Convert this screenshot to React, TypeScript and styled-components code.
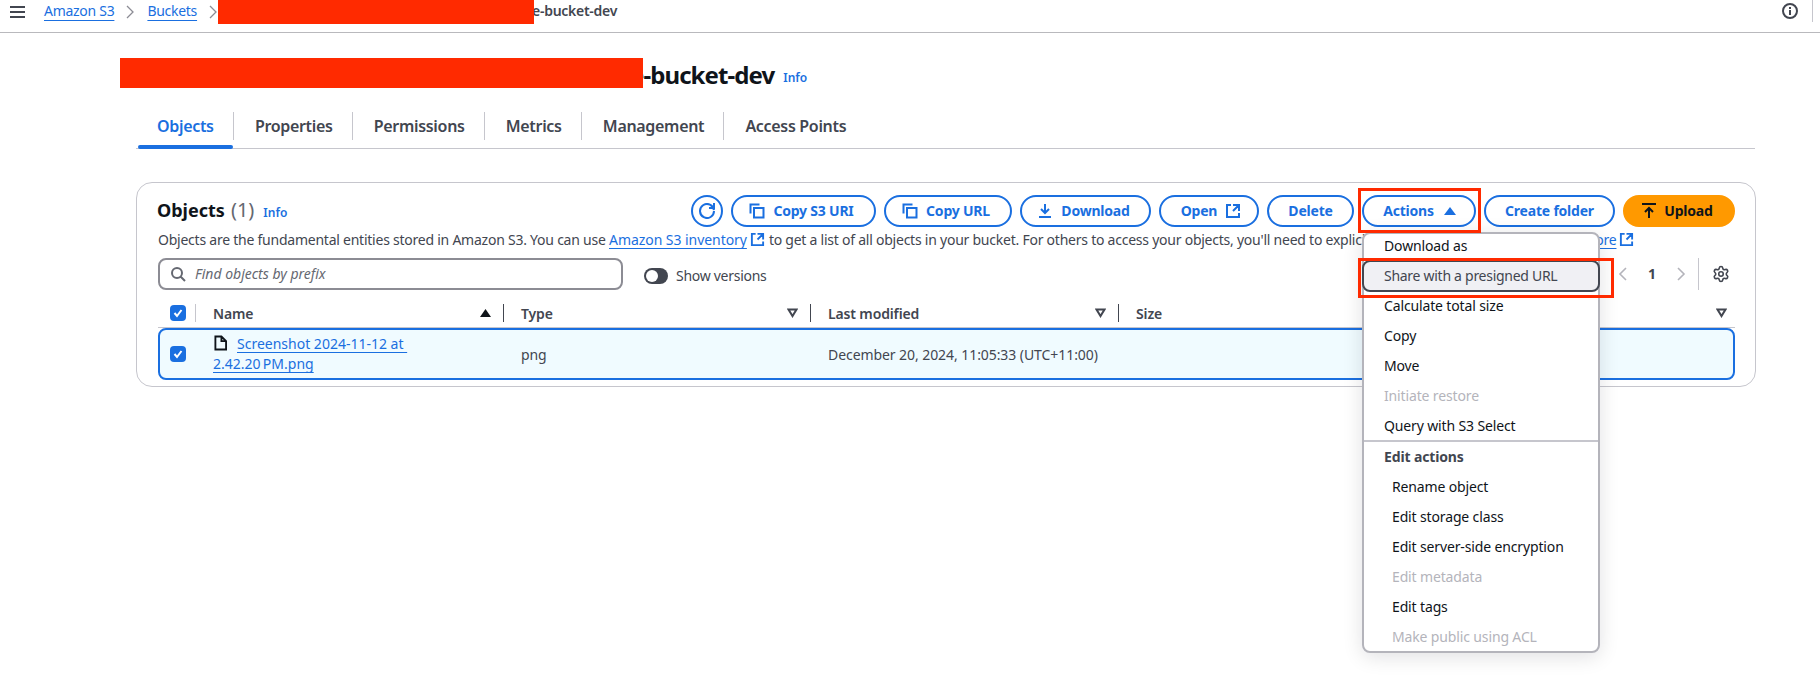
import React from "react";
import styled, { createGlobalStyle } from "styled-components";
import { Settings } from "lucide-react";

const Global = createGlobalStyle`
  html, body { margin: 0; padding: 0; background: #fff; }
  body { font-family: "Noto Sans", "Open Sans", sans-serif; font-size: 14px; line-height: 20px; color: #0f141a; }
  * { box-sizing: border-box; }
`;

const BLUE = "#1a6fe0";
const GRAY = "#424650";
const RED = "#ff2a00";

const Page = styled.div`height: 697px; width: 1820px; overflow: hidden;`;

const TopBar = styled.header`
  height: 33px; padding: 0 7px 0 10px; border-bottom: 1.5px solid #b9b9bd;
  display: flex; align-items: flex-start;
`;
const Burger = styled.svg`width: 15px; height: 12px; margin-top: 6px; color: ${GRAY}; flex: none;`;
const Crumbs = styled.nav`display: flex; align-items: flex-start; margin-left: 19px; flex: 1;`;
const CrumbLink = styled.a`
  color: ${BLUE}; text-decoration: underline; text-underline-offset: 4px; line-height: 22px; font-size: 14px; letter-spacing: -.02em;
`;
const CrumbSep = styled.svg`width: 12px; height: 14px; margin: 5px 11px 0 10px; color: #8c8c94; flex: none;`;
const CrumbRedact = styled.div`position: relative; z-index: 1; width: 316px; height: 24px; background: ${RED}; margin-left: -12px; flex: none;`;
const CrumbCurrent = styled.span`color: ${GRAY}; font-size: 14px; font-weight: 600; line-height: 22px; letter-spacing: -.02em; margin-left: -2px;`;
const InfoBtn = styled.div`
  width: 31px; height: 22px; border-right: 1px solid #c6c6cd; color: ${GRAY}; display: flex; justify-content: flex-start; padding-top: 3px; margin-left: auto;
  svg { width: 16px; height: 16px; }
`;

const TitleRow = styled.div`display: flex; align-items: flex-start; padding: 25px 0 0 120px; height: 55px;`;
const TitleRedact = styled.div`position: relative; z-index: 1; width: 523px; height: 30px; background: ${RED}; flex: none;`;
const TitleText = styled.h1`margin: 0 0 0 -13px; font-size: 24px; line-height: 30px; font-weight: 700; padding-top: 2px; letter-spacing: -.038em;`;
const TitleInfo = styled.a`color: ${BLUE}; font-size: 12px; font-weight: 600; line-height: 16px; margin: 12px 0 0 9px;`;
const InfoLink = styled.a`color: ${BLUE}; font-size: 12px; font-weight: 600; line-height: 16px; margin-left: 9px;`;

const Tabs = styled.div`margin: 24px 65px 0 136px; height: 37px; display: flex; border-bottom: 1.5px solid #c6c6cd; align-items: flex-start;`;
const Tab = styled.div<{ $active?: boolean; $last?: boolean }>`
  position: relative; height: 28px; padding: 0 19.2px 0 21px; display: flex; align-items: center;
  font-size: 16px; font-weight: 600; letter-spacing: -.02em; color: ${(p) => (p.$active ? BLUE : GRAY)};
  border-right: ${(p) => (p.$last ? "none" : "1px solid #c6c6cd")};
  ${(p) => p.$active && `&::after { content: ""; position: absolute; left: 2px; right: 0; top: 33px; height: 4px; background: ${BLUE}; border-radius: 2px; }`}
`;

const Card = styled.section`
  margin: 33px 0 0 136px; width: 1620px; height: 205px; border: 1px solid #c6c6cd; border-radius: 16px; padding: 12px 20px 0 21px;
`;
const CardHead = styled.div`display: flex; justify-content: space-between; align-items: center; height: 32px;`;
const HeadTitle = styled.div`display: flex; align-items: baseline; margin-top: -2px;`;
const H2 = styled.h2`margin: 0 0 0 -1px; font-size: 18px; line-height: 22px; font-weight: 700; letter-spacing: 0;`;
const Count = styled.span`font-size: 20px; color: #656871; margin-left: 6px;`;
const Buttons = styled.div`display: flex; gap: 8px; align-items: center;`;
const Btn = styled.button<{ $w: number }>`
  width: ${(p) => p.$w}px; height: 32px; border-radius: 16px; border: 2px solid ${BLUE}; background: #fff; color: ${BLUE};
  font: 700 14px/20px "Noto Sans", sans-serif; letter-spacing: -.015em; display: inline-flex; align-items: center; justify-content: center; gap: 8px; padding: 0;
  white-space: nowrap;
`;
const LeadIconBtn = styled(Btn)`padding-right: 4px;`;
const TrailIconBtn = styled(Btn)`padding-left: 4px;`;
const PrimaryBtn = styled(Btn)`background: #ff9900; border-color: #ff9900; color: #0f141a; gap: 7px; padding-right: 4px;`;
const IconBtn = styled(Btn)`border-radius: 50%;`;
const ActionsBtn = styled(Btn)`padding-left: 1px; gap: 6px;`;
const Icon = styled.svg<{ $s?: number }>`
  width: ${(p) => p.$s ?? 16}px; height: ${(p) => p.$s ?? 16}px; flex: none; fill: none; stroke: currentColor; stroke-width: 2;
`;
const ActionsWrap = styled.div`position: relative;`;
const Caret = styled.svg`width: 12px; height: 10px; margin-left: 4px; fill: ${BLUE};`;
const RedFrame = styled.div<{ $t: number; $r: number; $b: number; $l: number }>`
  position: absolute; top: ${(p) => p.$t}px; right: ${(p) => p.$r}px; bottom: ${(p) => p.$b}px; left: ${(p) => p.$l}px;
  border: 3px solid ${RED}; pointer-events: none; z-index: 5;
`;
const Menu = styled.div`
  position: absolute; top: 37px; left: 0; width: 238px; height: 421px; background: #fff; z-index: 3;
  border: 2px solid #b4b4bb; border-radius: 8px; box-shadow: 0 4px 20px rgba(0, 7, 22, .12);
`;
const MenuList = styled.div`margin-top: -3px;`;
const MenuItem = styled.div<{ $off?: boolean; $sub?: boolean }>`
  height: 30px; display: flex; align-items: center; padding-left: ${(p) => (p.$sub ? 28 : 20)}px; font-size: 14px; letter-spacing: -.01em; white-space: nowrap;
  color: ${(p) => (p.$off ? "#b4b4bb" : "#0f141a")};
`;
const MenuItemActive = styled(MenuItem)`
  position: relative; height: 32px; margin: -1px -2px; padding-left: 20px; background: #f0f0f4; border: 2px solid ${GRAY}; border-radius: 8px; color: ${GRAY}; letter-spacing: -.02em;
`;
const MenuHeading = styled(MenuItem)`font-weight: 700; color: ${GRAY}; border-top: 2px solid #c6c6cd; height: 32px; margin-top: -1px;`;

const Desc = styled.p`margin: 3px 0 0; height: 20px; color: ${GRAY}; white-space: nowrap; letter-spacing: -.017em; font-size: 14px;`;
const TextLink = styled.a`color: ${BLUE}; text-decoration: underline; text-underline-offset: 3px;`;
const DescLink = styled(TextLink)`letter-spacing: -.004em;`;
const Ext = styled(Icon)`vertical-align: -2px; margin: 0 4px 0 3px; color: ${BLUE}; width: 15px; height: 15px;`;

const Toolbar = styled.div`display: flex; align-items: center; height: 32px; margin-top: 8px;`;
const Search = styled.div`
  width: 465px; height: 32px; border: 2px solid #8c8c94; border-radius: 8px; display: flex; align-items: center; padding-left: 10px; gap: 9px; color: #656871;
  font-style: italic; letter-spacing: 0; font-size: 14px;
`;
const Toggle = styled.div`
  width: 24px; height: 16px; margin: 4px 0 0 21px; border-radius: 8px; background: ${GRAY}; position: relative; flex: none;
  &::before { content: ""; position: absolute; left: 2px; top: 2px; width: 12px; height: 12px; border-radius: 50%; background: #fff; }
`;
const ToggleLabel = styled.span`margin: 4px 0 0 8px; color: ${GRAY}; letter-spacing: -.02em;`;
const Pager = styled.div`margin-left: auto; display: flex; align-items: center; color: #b4b4bb; padding-right: 5px;`;
const PageNum = styled.span`font-weight: 700; color: ${GRAY}; margin: 0 19px;`;
const PagerDivider = styled.div`width: 1px; height: 32px; background: #c6c6cd; margin: 0 13px 0 11px;`;
const Gear = styled(Settings)`width: 18px; height: 18px; color: ${GRAY}; stroke-width: 2.1;`;

const COLS = "38px 308px 307px 308px 1fr";
const TableHead = styled.div`display: grid; grid-template-columns: ${COLS}; height: 31px; margin-top: 7px; border-bottom: 1px solid #c6c6cd; align-items: start;`;
const CheckCell = styled.div`height: 18px; margin-top: 7px; padding-left: 12px; border-right: 1px solid #c6c6cd; display: flex; align-items: center;`;
const HeadCell = styled.div<{ $bar?: boolean; $tail?: number }>`
  height: 18px; margin-top: 7px; padding: 0 ${(p) => p.$tail ?? 12}px 0 17px; display: flex; align-items: center; justify-content: space-between;
  font-weight: 600; color: ${GRAY}; letter-spacing: -.01em; line-height: 20px;
  border-right: ${(p) => (p.$bar ? `1px solid ${GRAY}` : "none")};
`;
const HeadLabel = styled.span`padding-top: 2px;`;
const Checkbox = styled.div`width: 16px; height: 16px; border-radius: 4px; background: ${BLUE}; display: flex; align-items: center; justify-content: center; flex: none;`;
const Sort = styled.svg`width: 11px; height: 10px; flex: none;`;

const Row = styled.div`
  display: grid; grid-template-columns: 36px 308px 307px 308px 1fr; height: 52px; border: 2px solid ${BLUE}; border-radius: 8px; background: #f0fbff; align-items: center;
`;
const RowCheck = styled.div`padding-left: 10px;`;
const NameCell = styled.div`padding-left: 17px; line-height: 20px; width: 250px;`;
const FileIcon = styled(Icon)`vertical-align: -2px; margin: 0 10px 0 1px; color: #0f141a; width: 13px; height: 16px;`;
const Cell = styled.div`padding: 2px 0 0 17px; color: ${GRAY}; letter-spacing: -.005em; white-space: nowrap;`;

const Ic = ({ d, s }: { d: string; s?: number }) => (
  <Icon viewBox="0 0 16 16" $s={s}><path d={d} /></Icon>
);
const COPY = "M1.5 10.5V1.5h9M5 5h9.5v9.5H5z";
const EXT = "M14 8V2H8M14 2 8 8M6 2H2v12h12v-4";
const Tick = () => (
  <svg width="12" height="12" viewBox="0 0 12 12" fill="none" stroke="#fff" strokeWidth="2"><path d="m2.5 6 2.5 3 4.5-6" /></svg>
);
const FilterIcon = () => (
  <Sort viewBox="0 0 11 10" fill="none" stroke={GRAY} strokeWidth="2"><path d="M1.5 1.5h8L5.5 8z" /></Sort>
);
const Chevron = ({ d }: { d: string }) => (
  <svg width="12" height="16" viewBox="0 0 12 16" fill="none" stroke="currentColor" strokeWidth="1.6"><path d={d} /></svg>
);

export default function App() {
  const tabs = ["Objects", "Properties", "Permissions", "Metrics", "Management", "Access Points"];
  return (
    <Page>
      <Global />
      <TopBar>
        <Burger viewBox="0 0 15 12" fill="none" stroke="currentColor" strokeWidth="2"><path d="M0 1h15M0 6h15M0 11h15" /></Burger>
        <Crumbs>
          <CrumbLink>Amazon S3</CrumbLink>
          <CrumbSep viewBox="0 0 12 14" fill="none" stroke="currentColor" strokeWidth="1.3"><path d="m3 1 6 6-6 6" /></CrumbSep>
          <CrumbLink>Buckets</CrumbLink>
          <CrumbSep viewBox="0 0 12 14" fill="none" stroke="currentColor" strokeWidth="1.3"><path d="m3 1 6 6-6 6" /></CrumbSep>
          <CrumbRedact />
          <CrumbCurrent>e-bucket-dev</CrumbCurrent>
        </Crumbs>
        <InfoBtn>
          <svg viewBox="0 0 16 16" fill="none" stroke="currentColor" strokeWidth="2"><circle cx="8" cy="8" r="7" /><path d="M8 12V7M8 6V4" /></svg>
        </InfoBtn>
      </TopBar>

      <TitleRow>
        <TitleRedact />
        <TitleText>e-bucket-dev</TitleText>
        <TitleInfo>Info</TitleInfo>
      </TitleRow>

      <Tabs>
        {tabs.map((t, i) => (
          <Tab key={t} $active={i === 0} $last={i === tabs.length - 1}>{t}</Tab>
        ))}
      </Tabs>

      <Card>
        <CardHead>
          <HeadTitle>
            <H2>Objects</H2>
            <Count>(1)</Count>
            <InfoLink>Info</InfoLink>
          </HeadTitle>
          <Buttons>
            <IconBtn $w={32}>
              <Icon viewBox="0 0 16 16"><path d="M10 5h5V0M15 8a7 7 0 1 1-.05-.83" /></Icon>
            </IconBtn>
            <LeadIconBtn $w={145}><Ic d={COPY} />Copy S3 URI</LeadIconBtn>
            <LeadIconBtn $w={128}><Ic d={COPY} />Copy URL</LeadIconBtn>
            <LeadIconBtn $w={131}><Ic d="M2 14h12M8 10V1M4 6l4 4 4-4" />Download</LeadIconBtn>
            <TrailIconBtn $w={100}>Open<Ic d={EXT} /></TrailIconBtn>
            <Btn $w={87}>Delete</Btn>
            <ActionsWrap>
              <ActionsBtn $w={114}>Actions<Caret viewBox="0 0 12 10"><path d="M6 1l6 8H0z" /></Caret></ActionsBtn>
              <RedFrame $t={-7} $r={-5} $b={-6} $l={-4} />
              <Menu>
                <MenuList>
                  <MenuItem>Download as</MenuItem>
                  <MenuItemActive>
                    Share with a presigned URL
                    <RedFrame $t={-4} $r={-16} $b={-8} $l={-6} />
                  </MenuItemActive>
                  <MenuItem>Calculate total size</MenuItem>
                  <MenuItem>Copy</MenuItem>
                  <MenuItem>Move</MenuItem>
                  <MenuItem $off>Initiate restore</MenuItem>
                  <MenuItem>Query with S3 Select</MenuItem>
                  <MenuHeading>Edit actions</MenuHeading>
                  <MenuItem $sub>Rename object</MenuItem>
                  <MenuItem $sub>Edit storage class</MenuItem>
                  <MenuItem $sub>Edit server-side encryption</MenuItem>
                  <MenuItem $sub $off>Edit metadata</MenuItem>
                  <MenuItem $sub>Edit tags</MenuItem>
                  <MenuItem $sub $off>Make public using ACL</MenuItem>
                </MenuList>
              </Menu>
            </ActionsWrap>
            <Btn $w={131}>Create folder</Btn>
            <PrimaryBtn $w={112}><Ic d="M1 1h14M8 15V5M4 9l4-4 4 4" />Upload</PrimaryBtn>
          </Buttons>
        </CardHead>

        <Desc>
          Objects are the fundamental entities stored in Amazon S3. You can use{" "}
          <DescLink>Amazon S3 inventory</DescLink>
          <Ext viewBox="0 0 16 16"><path d={EXT} /></Ext>
          to get a list of all objects in your bucket. For others to access your objects, you'll need to explicitly grant them permissions.{" "}
          <TextLink>Learn more</TextLink>
          <Ext viewBox="0 0 16 16"><path d={EXT} /></Ext>
        </Desc>

        <Toolbar>
          <Search>
            <Ic d="M11 11l4 4M7 12A5 5 0 1 0 7 2a5 5 0 0 0 0 10z" />
            Find objects by prefix
          </Search>
          <Toggle />
          <ToggleLabel>Show versions</ToggleLabel>
          <Pager>
            <Chevron d="M9 2 3 8l6 6" />
            <PageNum>1</PageNum>
            <Chevron d="m3 2 6 6-6 6" />
            <PagerDivider />
            <Gear />
          </Pager>
        </Toolbar>

        <TableHead>
          <CheckCell><Checkbox><Tick /></Checkbox></CheckCell>
          <HeadCell $bar><HeadLabel>Name</HeadLabel><Sort viewBox="0 0 11 10"><path d="M5.5 1 11 9H0z" fill="#0f141a" /></Sort></HeadCell>
          <HeadCell $bar><HeadLabel>Type</HeadLabel><FilterIcon /></HeadCell>
          <HeadCell $bar><HeadLabel>Last modified</HeadLabel><FilterIcon /></HeadCell>
          <HeadCell $tail={8}><HeadLabel>Size</HeadLabel><FilterIcon /></HeadCell>
        </TableHead>

        <Row>
          <RowCheck><Checkbox><Tick /></Checkbox></RowCheck>
          <NameCell>
            <FileIcon viewBox="0 0 14 16"><path d="M8 1v5h5M1.5 1H8l5 5v9H1.5z" /></FileIcon>
            <TextLink>{"Screenshot 2024-11-12 at\u00a0 2.42.20\u202fPM.png"}</TextLink>
          </NameCell>
          <Cell>png</Cell>
          <Cell>December 20, 2024, 11:05:33 (UTC+11:00)</Cell>
          <Cell />
        </Row>
      </Card>
    </Page>
  );
}
